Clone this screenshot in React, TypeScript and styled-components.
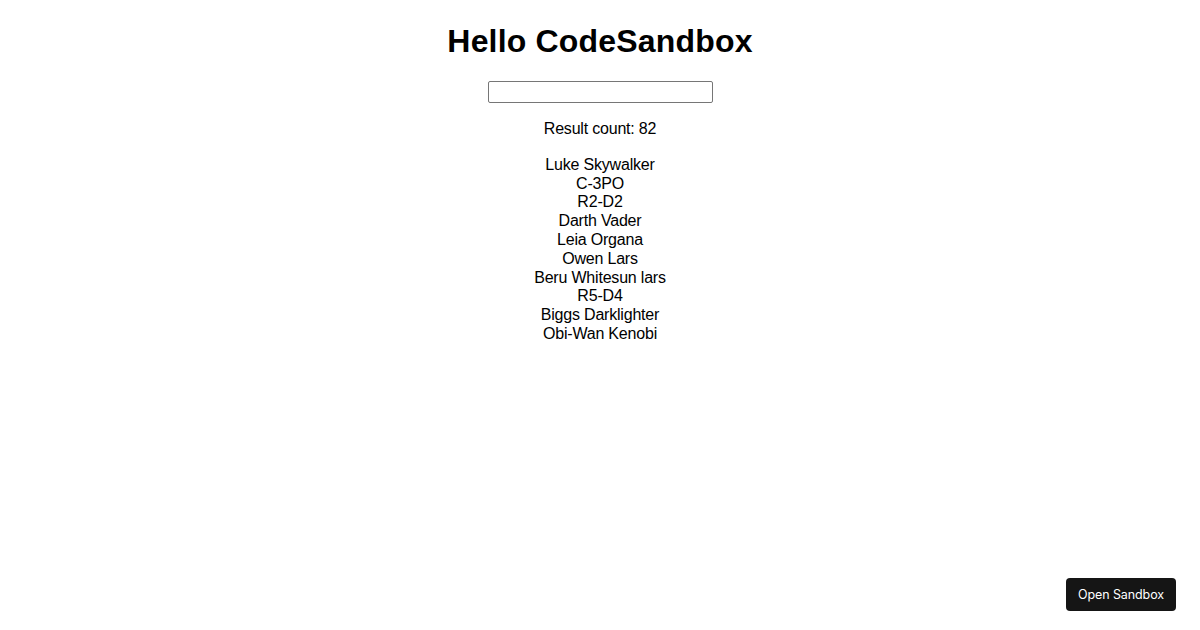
import React, { useState } from "react";
import styled, { createGlobalStyle } from "styled-components";

const Global = createGlobalStyle`
  html, body {
    margin: 0;
    padding: 0;
    background: #ffffff;
    color: #000000;
  }
`;

const AppRoot = styled.div`
  font-family: "Liberation Sans", Arial, sans-serif;
  text-align: center;
  padding-top: 23px;
  display: flex;
  flex-direction: column;
  align-items: center;
`;

const Title = styled.h1`
  font-size: 32px;
  font-weight: bold;
  line-height: 37px;
  letter-spacing: 0.18px;
  margin: 0 0 21px;
`;

const SearchInput = styled.input`
  display: block;
  box-sizing: border-box;
  font-family: "Liberation Sans", Arial, sans-serif;
  font-size: 13.33px;
  width: 225px;
  height: 22px;
  padding: 1px 2px;
  margin: 0;
  border: 1px solid #767676;
  border-radius: 2px;
  background: #fff;
`;

const Count = styled.p`
  font-size: 16px;
  line-height: 18.8px;
  letter-spacing: -0.2px;
  margin: 17px 0 17px;
`;

const List = styled.div`
  font-size: 16px;
  letter-spacing: -0.2px;
`;

const Item = styled.div`
  line-height: 18.8px;
`;

const OpenButton = styled.a`
  position: fixed;
  right: 24px;
  bottom: 19px;
  width: 110px;
  height: 33px;
  display: flex;
  align-items: center;
  justify-content: center;
  background: #151515;
  color: #ffffff;
  border-radius: 4px;
  font-family: Inter, "Liberation Sans", sans-serif;
  font-size: 12.5px;
  letter-spacing: -0.1px;
  text-decoration: none;
  box-sizing: border-box;
`;

const people = [
  "Luke Skywalker",
  "C-3PO",
  "R2-D2",
  "Darth Vader",
  "Leia Organa",
  "Owen Lars",
  "Beru Whitesun lars",
  "R5-D4",
  "Biggs Darklighter",
  "Obi-Wan Kenobi",
];

export default function App() {
  const [q, setQ] = useState("");
  return (
    <AppRoot>
      <Global />
      <Title>Hello CodeSandbox</Title>
      <SearchInput type="text" value={q} onChange={(e) => setQ(e.target.value)} />
      <Count>Result count: 82</Count>
      <List>
        {people.map((p) => (
          <Item key={p}>{p}</Item>
        ))}
      </List>
      <OpenButton href="#">Open Sandbox</OpenButton>
    </AppRoot>
  );
}
